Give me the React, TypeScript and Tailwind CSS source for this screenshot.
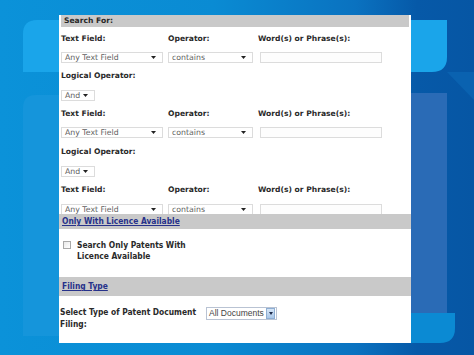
import React from "react";

const labelFont = { fontFamily: '"DejaVu Sans", Verdana, sans-serif' };
const condFont = { fontFamily: '"DejaVu Sans Condensed", "DejaVu Sans", sans-serif' };
const uiFont = { fontFamily: '"Liberation Sans", Arial, sans-serif' };

function Caret() {
    return (
        <svg width="5" height="3" viewBox="0 0 5 3" className="shrink-0">
            <path d="M0 0 H5 L2.5 3 Z" fill="#222" />
        </svg>
    );
}

function FakeSelect({ value, width }: { value: string; width: string }) {
    return (
        <div
            className={`${width} h-[11px] flex items-center justify-between pl-[3px] pr-[6px] border border-[#dcdcdc] bg-white text-[7.8px] text-[#5f5f5f] leading-none shrink-0`}
            style={labelFont}
        >
            <span>{value}</span>
            <Caret />
        </div>
    );
}

function LabelRow({ h }: { h: string }) {
    return (
        <div className={`${h} flex items-center text-[7.6px] font-bold text-[#2a2a2a] leading-none`} style={labelFont}>
            <span className="w-[109px] pl-[2px]">Text Field:</span>
            <span className="w-[90px]">Operator:</span>
            <span>Word(s) or Phrase(s):</span>
        </div>
    );
}

function FieldRow({ clip }: { clip?: boolean }) {
    return (
        <div className={`flex items-start ${clip ? "h-[10px] overflow-hidden" : "h-[11px]"} mt-[1px] pl-[2px]`}>
            <FakeSelect value="Any Text Field" width="w-[102px]" />
            <div className="w-[5px]" />
            <FakeSelect value="contains" width="w-[85px]" />
            <div className="w-[7px]" />
            <div className="w-[122px] h-[11px] border border-[#dcdcdc] bg-[#fdfdfd]" />
        </div>
    );
}

function LogicalRow({ h }: { h: string }) {
    return (
        <>
            <div className={`${h} flex items-center pl-[2px] text-[7.6px] font-bold text-[#2a2a2a] leading-none`} style={labelFont}>
                Logical Operator:
            </div>
            <div className="h-[11px] mt-[1px] pl-[2px] flex">
                <FakeSelect value="And" width="w-[34px]" />
            </div>
        </>
    );
}

function Band({ h, children }: { h: string; children: React.ReactNode }) {
    return (
        <div className={`${h} bg-[#c9c9c9] flex items-center pl-[3px]`}>
            <span
                className="text-[8.4px] font-bold text-[#26318a] underline leading-none"
                style={condFont}
            >
                {children}
            </span>
        </div>
    );
}

export default function App() {
    return (
        <div className="relative w-[474px] h-[355px] overflow-hidden bg-[linear-gradient(90deg,#0b92d9_0%,#0a8bd3_45%,#0a72c0_75%,#0659a8_88%,#0656a4_100%)]">
            {/* background decoration */}
            <svg className="absolute inset-0" width="474" height="355" viewBox="0 0 474 355">
                <path d="M23 34 Q23 20 37 20 H447 V57 Q447 72 432 72 H23 Z" fill="#1aa5ea" />
                <path d="M23 108 Q23 95 36 95 H62 V336 H23 Z" fill="#1595db" />
                <rect x="405" y="93" width="42" height="220" fill="#2a6bb6" />
                <path d="M405 313 H455 V328 Q455 343 440 343 H405 Z" fill="#0b8ad3" />
                <path d="M447 72 L474 100 V72 Z" fill="#0a62b0" />
            </svg>

            <div className="relative ml-[59px] mt-[15px] w-[352px] h-[328px] bg-white flex flex-col">
                <div className="h-[12px] mx-[2px] bg-[#c9c9c9] flex items-center pl-[3px]">
                    <span className="text-[7.6px] font-bold text-[#2a2a2a] leading-none" style={labelFont}>
                        Search For:
                    </span>
                </div>

                <LabelRow h="h-[24px]" />
                <FieldRow />
                <LogicalRow h="h-[26px]" />
                <LabelRow h="h-[25px]" />
                <FieldRow />
                <LogicalRow h="h-[27px]" />
                <LabelRow h="h-[26px]" />
                <FieldRow clip />

                <Band h="h-[15px]">Only With Licence Available</Band>

                <div className="h-[48px] flex items-start pt-[11px] pl-[4px]">
                    <div className="w-[8px] h-[8px] mt-[1px] border border-[#a8a8a8] bg-[linear-gradient(135deg,#e8e8e8,#ffffff)] shrink-0" />
                    <div
                        className="ml-[6px] text-[8.4px] font-bold text-[#2a2a2a] leading-[11px]"
                        style={condFont}
                    >
                        Search Only Patents With
                        <br />
                        Licence Available
                    </div>
                </div>

                <Band h="h-[19px]">Filing Type</Band>

                <div className="flex items-start pt-[10px] pl-[1px]">
                    <div
                        className="w-[146px] text-[8.4px] font-bold text-[#2a2a2a] leading-[12px]"
                        style={condFont}
                    >
                        Select Type of Patent Document
                        <br />
                        Filing:
                    </div>
                    <div className="mt-[1px] h-[13px] w-[71px] flex items-center border border-[#b9c3d3] bg-white">
                        <span className="flex-1 pl-[2px] text-[8.5px] text-[#444] leading-none" style={uiFont}>
                            All Documents
                        </span>
                        <div className="w-[9px] h-[11px] mr-[1px] bg-[linear-gradient(180deg,#d6e6f7,#a9c6e8)] border border-[#8eaed3] flex items-center justify-center">
                            <svg width="4" height="3" viewBox="0 0 4 3">
                                <path d="M0 0 H4 L2 3 Z" fill="#1d2b4a" />
                            </svg>
                        </div>
                    </div>
                </div>
            </div>
        </div>
    );
}
